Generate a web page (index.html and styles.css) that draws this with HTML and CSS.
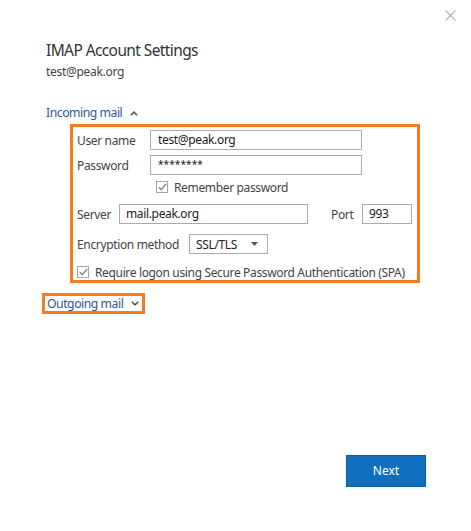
FILE: index.html
```html
<!DOCTYPE html>
<html lang="en">
<head>
<meta charset="utf-8">
<title>IMAP Account Settings</title>
<link rel="stylesheet" href="styles.css">
</head>
<body>
<div class="dialog">
  <button class="close" aria-label="Close">
    <svg width="11" height="11" viewBox="0 0 11 11"><path d="M0.5 0.5 L10.5 10.5 M10.5 0.5 L0.5 10.5" stroke="#b4b4b4" stroke-width="1.1" fill="none"/></svg>
  </button>
  <h1 class="title">IMAP Account Settings</h1>
  <div class="email">test@peak.org</div>

  <div class="section-toggle incoming">Incoming mail
    <svg class="caret" width="8" height="5" viewBox="0 0 8 5"><path d="M0.8 4.3 L4 1.2 L7.2 4.3" stroke="#555" stroke-width="1.6" fill="none"/></svg>
  </div>

  <div class="panel">
    <div class="row r1">
      <span class="label w-user">User name</span>
      <div class="input wide">test@peak.org</div>
    </div>
    <div class="row r2">
      <span class="label w-user">Password</span>
      <div class="input wide pw">********</div>
    </div>
    <div class="row r3 remember">
      <span class="check"><svg width="9" height="8" viewBox="0 0 9 8"><path d="M0.8 4.2 L3.3 6.7 L8.2 0.8" stroke="#6d6d6d" stroke-width="1.1" fill="none"/></svg></span>
      <span class="label">Remember password</span>
    </div>
    <div class="row r4">
      <span class="label w-server">Server</span>
      <div class="input server">mail.peak.org</div>
      <span class="label port-label">Port</span>
      <div class="input port">993</div>
    </div>
    <div class="row r5">
      <span class="label w-enc">Encryption method</span>
      <div class="select">SSL/TLS
        <svg class="arrow" width="7" height="4" viewBox="0 0 7 4"><path d="M0 0 H7 L3.5 4 Z" fill="#555"/></svg>
      </div>
    </div>
    <div class="row r6">
      <span class="check"><svg width="9" height="8" viewBox="0 0 9 8"><path d="M0.8 4.2 L3.3 6.7 L8.2 0.8" stroke="#6d6d6d" stroke-width="1.1" fill="none"/></svg></span>
      <span class="label">Require logon using Secure Password Authentication (SPA)</span>
    </div>
  </div>

  <div class="section-toggle outgoing">Outgoing mail
    <svg class="caret" width="8" height="5" viewBox="0 0 8 5"><path d="M0.8 0.7 L4 3.8 L7.2 0.7" stroke="#555" stroke-width="1.6" fill="none"/></svg>
  </div>

  <div class="footer">
    <button class="next">Next</button>
  </div>
</div>
</body>
</html>
```

FILE: styles.css
```css
* { box-sizing: border-box; }
html, body {
  margin: 0;
  padding: 0;
  background: #ffffff;
}
body {
  font-family: "Noto Sans", "Open Sans", sans-serif;
  color: #444;
  width: 471px;
  height: 531px;
  overflow: hidden;
}
.dialog {
  position: relative;
  width: 471px;
  height: 531px;
  padding: 0;
}
.close {
  position: absolute;
  top: 10px;
  left: 445px;
  border: 0;
  background: none;
  padding: 0;
  width: 11px;
  height: 11px;
  display: block;
}
.close svg { display: block; }
.title {
  margin: 0;
  padding: 40px 0 0 46px;
  font-size: 15.5px;
  font-weight: 400;
  letter-spacing: -0.6px;
  line-height: 20px;
  color: #333;
}
.email {
  margin: 4px 0 0 46px;
  font-size: 12px;
  letter-spacing: -0.3px;
  line-height: 16px;
  color: #444;
}
.section-toggle {
  display: inline-flex;
  align-items: center;
  font-size: 12.2px;
  letter-spacing: -0.45px;
  color: #2b5797;
  line-height: 16px;
  white-space: nowrap;
}
.section-toggle .caret { margin-left: 8px; }
.incoming {
  margin: 25px 0 0 46px;
  display: flex;
}
.panel {
  margin: 3px 0 0 70px;
  width: 350px;
  height: 159px;
  border: 3px solid #f47d23;
  padding: 3px 0 0 4px;
  letter-spacing: -0.35px;
}
.row {
  display: flex;
  align-items: center;
  height: 20px;
  font-size: 12px;
}
.label {
  color: #444;
  white-space: nowrap;
}
.w-user { width: 73px; }
.w-server { width: 42px; }
.w-enc { width: 112px; }
.r2 { margin-top: 5px; }
.r3 { margin-top: 4px; height: 16px; padding-left: 79px; }
.r4 { margin-top: 9px; }
.r5 { margin-top: 10px; }
.r6 { margin-top: 10px; height: 16px; }
.input {
  height: 20px;
  border: 1px solid #ababab;
  padding: 0 7px;
  font-size: 12px;
  line-height: 18px;
  color: #222;
  background: #fff;
}
.wide { width: 212px; }
.pw { font-size: 10px; letter-spacing: 0.1px; line-height: 16px; }
.server { width: 189px; padding-left: 6px; }
.port-label { margin-left: 23px; width: 31px; }
.port { width: 50px; padding-left: 6px; }
.check {
  width: 12px;
  height: 12px;
  border: 1px solid #a5a5a5;
  display: inline-flex;
  align-items: center;
  justify-content: center;
  margin-right: 6px;
  background: #fff;
}
.check svg { display: block; }
.select {
  width: 79px;
  height: 20px;
  border: 1px solid #ababab;
  display: flex;
  align-items: center;
  justify-content: space-between;
  padding: 0 9px 0 6px;
  color: #222;
}
.outgoing {
  margin: 10px 0 0 42px;
  border: 3px solid #f47d23;
  height: 21px;
  width: 103px;
  padding-left: 2px;
  display: flex;
}
.footer {
  display: flex;
  justify-content: flex-end;
  padding: 141px 45px 0 0;
}
.next {
  width: 80px;
  height: 32px;
  background: #106ebe;
  border: 1px solid #0b5ea8;
  color: #fff;
  font-family: inherit;
  font-size: 12px;
  padding: 0 0 1px;
}
```
